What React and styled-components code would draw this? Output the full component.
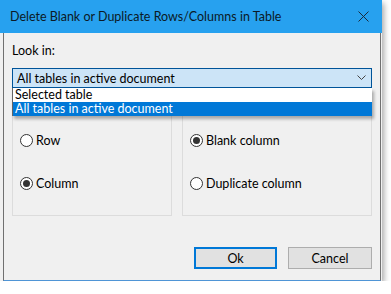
import React from "react";
import styled, { createGlobalStyle } from "styled-components";

const GlobalStyle = createGlobalStyle`
    html, body {
        margin: 0;
        padding: 0;
        background: #ffffff;
    }
    body {
        font-family: Lato, "Noto Sans", sans-serif;
        font-size: 12.5px;
        color: #000000;
    }
`;

const Window = styled.div`
    width: 382px;
    background: #f0f0f0;
    box-shadow: 2px 3px 6px rgba(0, 0, 0, 0.35);
`;
const TitleBar = styled.div`
    height: 33px;
    background: #27a1ef;
    display: flex;
    align-items: center;
    justify-content: space-between;
    padding: 0 13px 0 10px;
    box-sizing: border-box;
`;
const TitleText = styled.div`
    font-size: 12.5px;
    color: #0b1a26;
`;
const Body = styled.div`
    margin: 0 1px 0 3px;
    border-left: 1px solid #707070;
    border-right: 1px solid #707070;
    border-bottom: 1px solid #4f95d6;
    padding: 10px 8px 11px 8px;
    display: flex;
    flex-direction: column;
`;
const Label = styled.div`
    line-height: 16px;
    height: 16px;
    margin-bottom: 9px;
`;
const ComboWrap = styled.div`
    position: relative;
`;
const Combo = styled.div`
    height: 20px;
    box-sizing: border-box;
    border: 1px solid #005499;
    background: #cce4f7;
    display: flex;
    align-items: center;
    justify-content: space-between;
    padding: 0 5px 0 4px;
`;
const List = styled.div`
    position: absolute;
    top: 20px;
    left: 0;
    right: 0;
    z-index: 2;
    background: #ffffff;
    border-left: 1px solid #646464;
    box-shadow: 2px 3px 3px rgba(0, 0, 0, 0.3);
`;
const Item = styled.div`
    height: 14px;
    line-height: 14px;
    padding-left: 2px;
    background: ${p => (p.$active ? "#0078d7" : "#ffffff")};
    color: ${p => (p.$active ? "#ffffff" : "#000000")};
`;
const Groups = styled.div`
    margin-top: 20px;
    display: grid;
    grid-template-columns: 160px 190px;
    column-gap: 10px;
`;
const Group = styled.div`
    height: 108px;
    box-sizing: border-box;
    border: 1px solid #dcdcdc;
    padding: 23px 7px 0 7px;
    display: flex;
    flex-direction: column;
    gap: 27px;
`;
const RadioRow = styled.label`
    display: flex;
    align-items: center;
    gap: 3px;
    height: 16px;
`;
const RadioDot = styled.span`
    width: 13px;
    height: 13px;
    box-sizing: border-box;
    border-radius: 50%;
    border: 1px solid #333333;
    background: #ffffff;
    display: flex;
    align-items: center;
    justify-content: center;
    &::after {
        content: "";
        width: 7px;
        height: 7px;
        border-radius: 50%;
        background: ${p => (p.$on ? "#333333" : "transparent")};
    }
`;
const Buttons = styled.div`
    margin-top: 31px;
    display: flex;
    justify-content: flex-end;
    gap: 11px;
`;
const Button = styled.div`
    width: ${p => p.$w}px;
    height: 22px;
    box-sizing: border-box;
    background: #e1e1e1;
    border: ${p => (p.$primary ? "2px solid #0078d7" : "1px solid #adadad")};
    display: flex;
    align-items: center;
    justify-content: center;
`;

function Radio({ on, children }) {
    return (
        <RadioRow>
            <RadioDot $on={on} />
            {children}
        </RadioRow>
    );
}

export default function App() {
    return (
        <>
            <GlobalStyle />
            <Window>
                <TitleBar>
                    <TitleText>Delete Blank or Duplicate Rows/Columns in Table</TitleText>
                    <svg width="11" height="11" viewBox="0 0 11 11">
                        <path d="M0.5 0.5 L10.5 10.5 M10.5 0.5 L0.5 10.5" stroke="#1b2b3a" strokeWidth="1" fill="none" />
                    </svg>
                </TitleBar>
                <Body>
                    <Label>Look in:</Label>
                    <ComboWrap>
                        <Combo>
                            <span>All tables in active document</span>
                            <svg width="9" height="6" viewBox="0 0 9 6">
                                <path d="M0.5 0.5 L4.5 4.5 L8.5 0.5" stroke="#444444" strokeWidth="1" fill="none" />
                            </svg>
                        </Combo>
                        <List>
                            <Item>Selected table</Item>
                            <Item $active>All tables in active document</Item>
                        </List>
                    </ComboWrap>
                    <Groups>
                        <Group>
                            <Radio>Row</Radio>
                            <Radio on>Column</Radio>
                        </Group>
                        <Group>
                            <Radio on>Blank column</Radio>
                            <Radio>Duplicate column</Radio>
                        </Group>
                    </Groups>
                    <Buttons>
                        <Button $w={83} $primary>Ok</Button>
                        <Button $w={84}>Cancel</Button>
                    </Buttons>
                </Body>
            </Window>
        </>
    );
}
